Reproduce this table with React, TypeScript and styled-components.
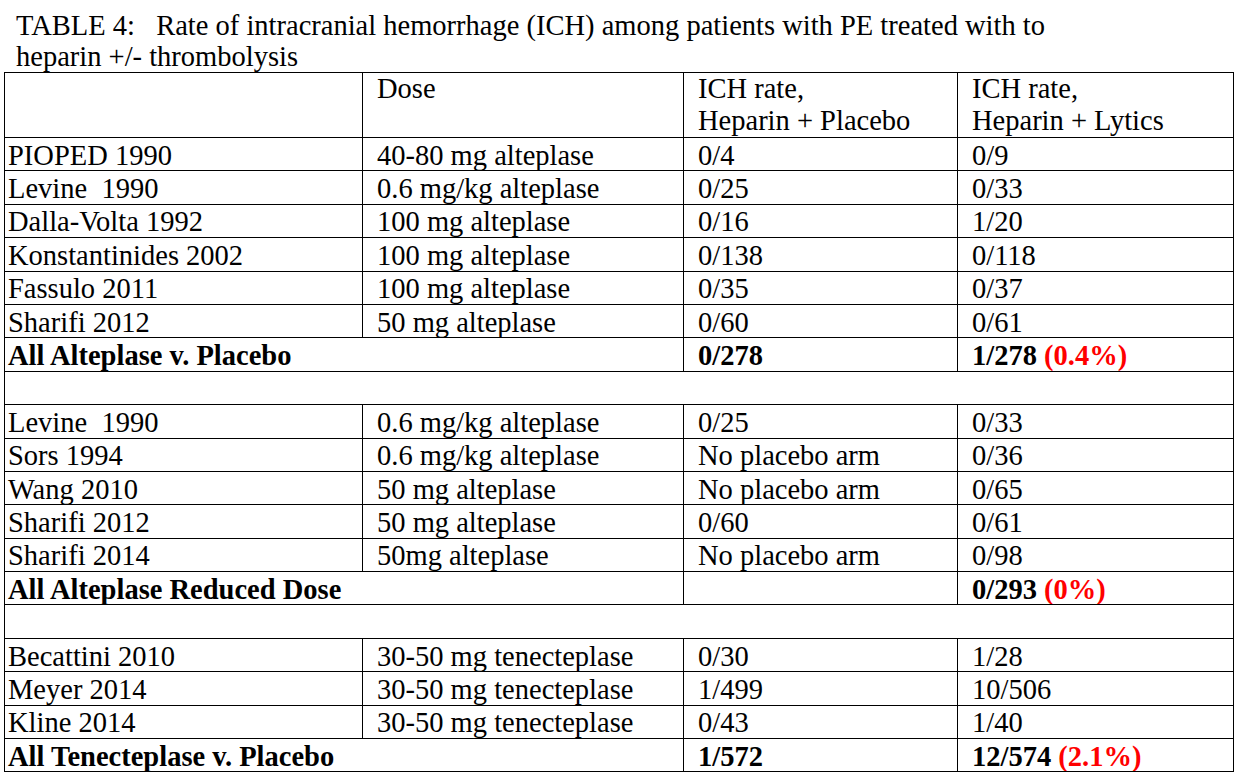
import React from 'react';
import styled, { createGlobalStyle } from 'styled-components';

const GlobalStyle = createGlobalStyle`
  html, body {
    margin: 0;
    padding: 0;
    background: #ffffff;
  }
  body {
    font-family: 'Liberation Serif', 'Times New Roman', serif;
    color: #000000;
  }
`;

type Row =
  | { kind: 'study'; name: string; dose: string; placebo: string; lytics: string }
  | { kind: 'total'; name: string; placebo: string; lytics: string; pct: string }
  | { kind: 'blank' };

const rows: Row[] = [
  { kind: 'study', name: 'PIOPED 1990', dose: '40-80 mg alteplase', placebo: '0/4', lytics: '0/9' },
  { kind: 'study', name: 'Levine  1990', dose: '0.6 mg/kg alteplase', placebo: '0/25', lytics: '0/33' },
  { kind: 'study', name: 'Dalla-Volta 1992', dose: '100 mg alteplase', placebo: '0/16', lytics: '1/20' },
  { kind: 'study', name: 'Konstantinides 2002', dose: '100 mg alteplase', placebo: '0/138', lytics: '0/118' },
  { kind: 'study', name: 'Fassulo 2011', dose: '100 mg alteplase', placebo: '0/35', lytics: '0/37' },
  { kind: 'study', name: 'Sharifi 2012', dose: '50 mg alteplase', placebo: '0/60', lytics: '0/61' },
  { kind: 'total', name: 'All Alteplase v. Placebo', placebo: '0/278', lytics: '1/278', pct: '(0.4%)' },
  { kind: 'blank' },
  { kind: 'study', name: 'Levine  1990', dose: '0.6 mg/kg alteplase', placebo: '0/25', lytics: '0/33' },
  { kind: 'study', name: 'Sors 1994', dose: '0.6 mg/kg alteplase', placebo: 'No placebo arm', lytics: '0/36' },
  { kind: 'study', name: 'Wang 2010', dose: '50 mg alteplase', placebo: 'No placebo arm', lytics: '0/65' },
  { kind: 'study', name: 'Sharifi 2012', dose: '50 mg alteplase', placebo: '0/60', lytics: '0/61' },
  { kind: 'study', name: 'Sharifi 2014', dose: '50mg alteplase', placebo: 'No placebo arm', lytics: '0/98' },
  { kind: 'total', name: 'All Alteplase Reduced Dose', placebo: '', lytics: '0/293', pct: '(0%)' },
  { kind: 'blank' },
  { kind: 'study', name: 'Becattini 2010', dose: '30-50 mg tenecteplase', placebo: '0/30', lytics: '1/28' },
  { kind: 'study', name: 'Meyer 2014', dose: '30-50 mg tenecteplase', placebo: '1/499', lytics: '10/506' },
  { kind: 'study', name: 'Kline 2014', dose: '30-50 mg tenecteplase', placebo: '0/43', lytics: '1/40' },
  { kind: 'total', name: 'All Tenecteplase v. Placebo', placebo: '1/572', lytics: '12/574', pct: '(2.1%)' },
];

const Page = styled.div`
  padding: 10px 0 0 4px;
  width: 1239px;
  box-sizing: border-box;
`;

const Title = styled.div`
  padding-left: 12px;
  font-size: 28.5px;
  line-height: 31px;
  white-space: pre;
`;

const Table = styled.table`
  border-collapse: collapse;
  table-layout: fixed;
  width: 1229px;
  font-size: 28.5px;
  line-height: 28px;
`;

const Cell = styled.td<{ $first?: boolean; $bold?: boolean }>`
  border: 1.6px solid #000000;
  padding: 3px 0 0 ${p => (p.$first ? '3px' : '14px')};
  height: 29.4px;
  vertical-align: middle;
  white-space: pre;
  overflow: hidden;
  font-weight: ${p => (p.$bold ? 700 : 400)};
`;

const HeadCell = styled(Cell)`
  height: 64px;
  vertical-align: top;
  padding-top: 0;
  line-height: 32px;
`;

const Percent = styled.span`
  color: #ff0000;
`;

export default function App() {
  return (
    <>
      <GlobalStyle />
      <Page>
        <Title>
          {'TABLE 4:   Rate of intracranial hemorrhage (ICH) among patients with PE treated with to'}
          {'\n'}
          {'heparin +/- thrombolysis'}
        </Title>
        <Table>
          <colgroup>
            <col style={{ width: 358 }} />
            <col style={{ width: 321 }} />
            <col style={{ width: 274 }} />
            <col style={{ width: 276 }} />
          </colgroup>
          <tbody>
            <tr>
              <HeadCell $first></HeadCell>
              <HeadCell>Dose</HeadCell>
              <HeadCell>{'ICH rate,\nHeparin + Placebo'}</HeadCell>
              <HeadCell>{'ICH rate,\nHeparin + Lytics'}</HeadCell>
            </tr>
            {rows.map((r, i) => {
              if (r.kind === 'blank') {
                return (
                  <tr key={i}>
                    <Cell $first colSpan={4}></Cell>
                  </tr>
                );
              }
              if (r.kind === 'total') {
                return (
                  <tr key={i}>
                    <Cell $first $bold colSpan={2}>{r.name}</Cell>
                    <Cell $bold>{r.placebo}</Cell>
                    <Cell $bold>
                      {r.lytics} <Percent>{r.pct}</Percent>
                    </Cell>
                  </tr>
                );
              }
              return (
                <tr key={i}>
                  <Cell $first>{r.name}</Cell>
                  <Cell>{r.dose}</Cell>
                  <Cell>{r.placebo}</Cell>
                  <Cell>{r.lytics}</Cell>
                </tr>
              );
            })}
          </tbody>
        </Table>
      </Page>
    </>
  );
}
